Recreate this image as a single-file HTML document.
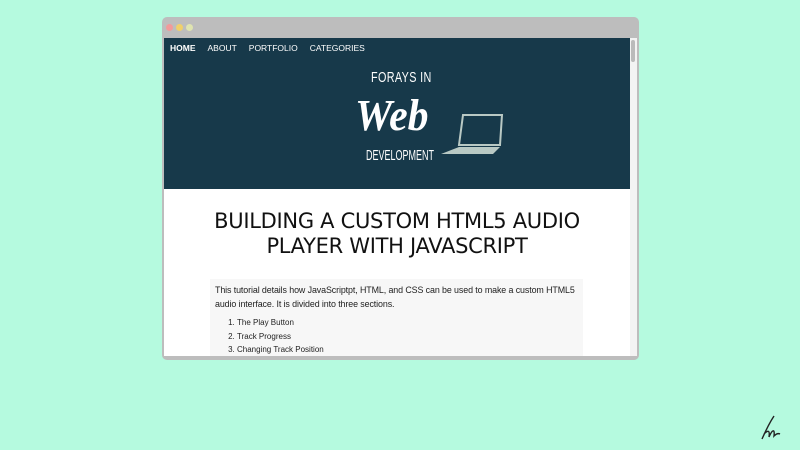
<!DOCTYPE html>
<html><head><style>
*{margin:0;padding:0;box-sizing:border-box}
body{width:800px;height:450px;background:#b5fadf;position:relative;overflow:hidden;font-family:"Liberation Sans",sans-serif}
.win{position:absolute;left:162px;top:17px;width:477px;height:343px;background:#bdbdbd;border-radius:5px}
.dot{position:absolute;top:7px;width:7px;height:7px;border-radius:50%}
.page{position:absolute;left:2px;top:21px;width:466px;height:318px;background:#fff;overflow:hidden}
.sb{position:absolute;left:468px;top:21px;width:7px;height:318px;background:#f3f3f3}
.sb div{position:absolute;left:1px;top:2px;width:4px;height:22px;background:#bbb;border-radius:2px}
.hdr{position:absolute;left:0;top:0;width:466px;height:151px;background:#17394a;color:#fff}
.nav{position:absolute;top:5px;left:6px;font-size:8.5px;color:#fff}
.nav span{margin-right:12px}
h1{position:absolute;top:171px;left:0;width:466px;text-align:center;font-weight:normal;font-size:21px;line-height:25px;color:#111;font-family:"DejaVu Sans",sans-serif;letter-spacing:-0.3px}
.box{position:absolute;left:46px;top:241px;width:373px;height:80px;background:#f7f7f7;font-family:"Liberation Sans",sans-serif;font-size:8.9px;letter-spacing:-0.1px;color:#222;padding:4px 5px;line-height:14px;white-space:nowrap}
ol{margin-top:5px;padding-left:22px;font-size:8px;line-height:13.5px;letter-spacing:0}
</style></head><body>
<div class="win">
<div class="dot" style="left:4px;background:#f29a9a"></div>
<div class="dot" style="left:14px;background:#f0d06a"></div>
<div class="dot" style="left:24px;background:#dfe4b0"></div>
<div class="page">
<div class="hdr">
<div class="nav"><span style="font-weight:bold">HOME</span><span>ABOUT</span><span>PORTFOLIO</span><span>CATEGORIES</span></div>
<div style="position:absolute;left:207px;top:31px;font-size:15px;letter-spacing:0.5px;transform:scaleX(0.72);transform-origin:left">FORAYS IN</div>
<div style="position:absolute;left:191px;top:52px;font-size:44px;font-style:italic;font-weight:bold;font-family:'Liberation Serif',serif;transform:scaleX(0.95);transform-origin:left">Web</div>
<div style="position:absolute;left:202px;top:109px;font-size:15px;transform:scaleX(0.6);transform-origin:left">DEVELOPMENT</div>
<svg style="position:absolute;left:275px;top:75px" width="70" height="45"><polygon points="24,2 63,2 61,32 20,32" fill="none" stroke="#b9c9c4" stroke-width="2"/><polygon points="20,34 61,34 54,41 2,41" fill="#b9c9c4"/></svg>
</div>
<h1>BUILDING A CUSTOM HTML5 AUDIO<br>PLAYER WITH JAVASCRIPT</h1>
<div class="box">This tutorial details how JavaScriptpt, HTML, and CSS can be used to make a custom HTML5<br>audio interface. It is divided into three sections.
<ol><li>The Play Button</li><li>Track Progress</li><li>Changing Track Position</li></ol></div>
</div>
<div class="sb"><div></div></div>
</div>
<svg style="position:absolute;left:760px;top:412px" width="30" height="30"><path d="M2,27 C6,18 10,10 14,4 M4,22 C8,18 10,18 9,25 C12,18 15,16 14,24 C16,22 18,21 20,22" fill="none" stroke="#222" stroke-width="1.4"/></svg>
</body></html>
